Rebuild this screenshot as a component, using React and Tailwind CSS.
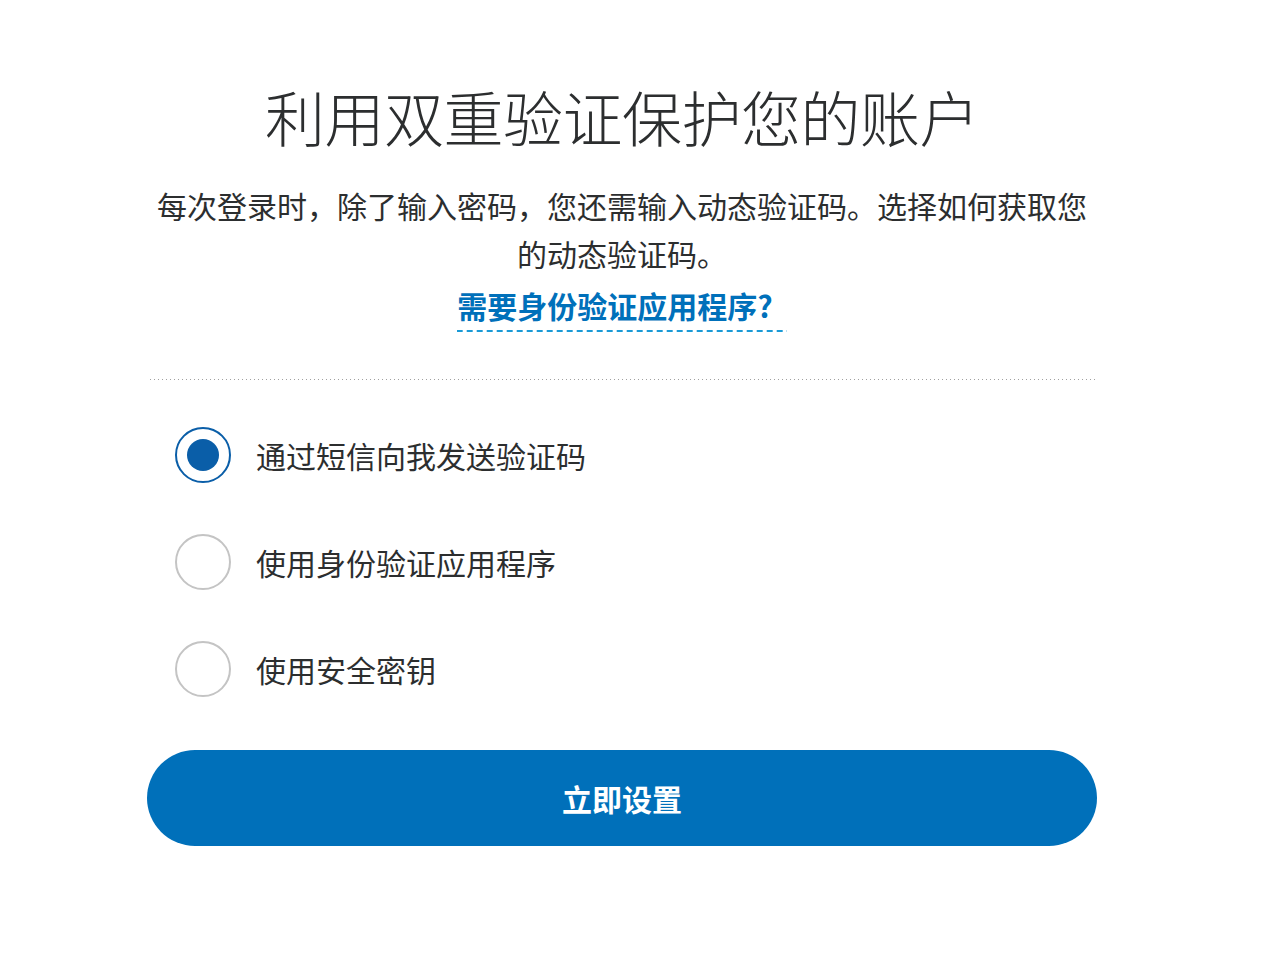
import { useState } from 'react';

const options = [
    { id: 'sms', label: '通过短信向我发送验证码' },
    { id: 'app', label: '使用身份验证应用程序' },
    { id: 'key', label: '使用安全密钥' },
];

export default function App() {
    const [method, setMethod] = useState('sms');

    return (
        <div className="min-h-screen bg-white font-['Noto_Sans_CJK_SC','Noto_Sans',sans-serif] text-[#2c2e2f]">
            <div className="ml-[147px] w-[950px] pt-[80px]">
                <h1 className="text-center text-[60px] leading-[72px] font-light tracking-[-0.5px]">
                    利用双重验证保护您的账户
                </h1>
                <p className="mt-[29px] px-[8px] text-center text-[30px] leading-[48px]">
                    每次登录时，除了输入密码，您还需输入动态验证码。选择如何获取您的动态验证码。
                </p>
                <div className="mt-[8px] text-center">
                    <a
                        href="#"
                        className="inline-block pr-[14px] pb-[7px] text-[30px] leading-[40px] font-bold text-[#0070ba] bg-[linear-gradient(to_right,#1a9ad6_6px,transparent_6px)] bg-[length:10px_2px] bg-bottom bg-repeat-x"
                    >
                        需要身份验证应用程序?
                    </a>
                </div>

                {/* Separator */}
                <div className="mt-[47px] ml-[3px] h-px bg-[linear-gradient(to_right,#a0a0a0_1px,transparent_1px)] bg-[length:4px_1px] bg-repeat-x" />

                <div className="mt-[21px] ml-[28px] flex flex-col">
                    {options.map(opt => {
                        const checked = method === opt.id;
                        return (
                            <label
                                key={opt.id}
                                className="flex h-[107px] cursor-pointer items-center gap-[25px]"
                                onClick={() => setMethod(opt.id)}
                            >
                                <span
                                    className={`flex h-[56px] w-[56px] shrink-0 items-center justify-center rounded-full border-2 ${checked ? 'border-[#0a5ea8]' : 'border-[#c4c4c4]'}`}
                                >
                                    {checked && <span className="block h-[32px] w-[32px] rounded-full bg-[#0a5ea8]" />}
                                </span>
                                <span className="text-[30px] leading-[40px]">{opt.label}</span>
                            </label>
                        );
                    })}
                </div>

                <button className="mt-[28px] flex h-[96px] w-full items-center justify-center rounded-full bg-[#0070ba] text-[30px] font-bold text-white">
                    立即设置
                </button>
            </div>
        </div>
    );
}
